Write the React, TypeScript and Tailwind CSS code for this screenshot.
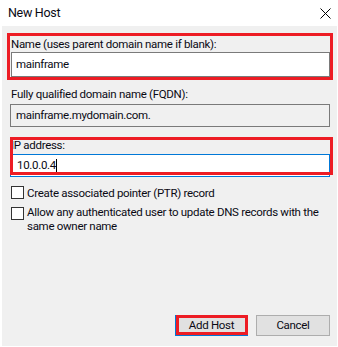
import React from 'react';

const Checkbox: React.FC = () => (
  <span className="block w-[13px] h-[13px] shrink-0 border border-[#333333] bg-white" />
);

const App: React.FC = () => {
  return (
    <div
      className="relative w-[338px] h-[347px] bg-white flex flex-col text-[11.5px] tracking-[-0.3px] text-[#0a0a14]"
      style={{ fontFamily: 'Roboto, "Liberation Sans", Arial, sans-serif' }}
    >
      {/* Title bar */}
      <div className="h-[26px] flex items-center justify-between pl-[8px] pr-[6px]">
        <span className="text-[12.5px] leading-[16px]">New Host</span>
        <svg width="11" height="11" viewBox="0 0 11 11" className="mr-[1px]">
          <path d="M0.5 0.5 L10.5 10.5 M10.5 0.5 L0.5 10.5" stroke="#000" strokeWidth="1" fill="none" />
        </svg>
      </div>

      {/* Dialog body */}
      <div className="flex-1 ml-[2px] mr-[1px] mb-[1px] bg-[#f0f0f0] flex flex-col pt-[11px] pl-[8px] pr-[7px]">
        <div className="pl-[1px] h-[15px] leading-[15px]">Name (uses parent domain name if blank):</div>
        <div className="ml-[1px] h-[25px] bg-white border border-[#7a7a7a] flex items-center pl-[4px]">
          mainframe
        </div>

        <div className="mt-[10px] pl-[1px] h-[15px] leading-[15px]">Fully qualified domain name (FQDN):</div>
        <div className="mt-[2px] h-[23px] border border-[#7a7a7a] flex items-center pl-[5px]">
          mainframe.mydomain.com.
        </div>

        <div className="mt-[11px] pl-[1px] h-[15px] leading-[15px]">IP address:</div>
        <div className="mt-[1px] h-[23px] bg-white border border-[#0078d7] flex items-center pl-[6px]">
          <span>10.0.0.4</span>
          <span className="inline-block w-[1px] h-[14px] bg-black" />
        </div>

        <label className="mt-[9px] ml-[1px] flex items-center gap-[3px] h-[13px] leading-[14px]">
          <Checkbox />
          <span>Create associated pointer (PTR) record</span>
        </label>
        <label className="mt-[6px] ml-[1px] flex items-start gap-[3px] leading-[14px]">
          <span className="mt-[2px]">
            <Checkbox />
          </span>
          <span className="w-[300px]">
            Allow any authenticated user to update DNS records with the same owner name
          </span>
        </label>

        <div className="flex-1" />

        <div className="flex justify-end items-end gap-[8px] pb-[10px]">
          <button className="w-[73px] h-[21px] bg-[#e1e1e1] border border-[#0078d7] leading-none">
            Add Host
          </button>
          <button className="w-[74px] h-[21px] bg-[#e1e1e1] border border-[#adadad] leading-none">
            Cancel
          </button>
        </div>
      </div>

      {/* Red annotation boxes */}
      <div className="absolute left-[7px] top-[33px] w-[326px] h-[47px] border-[3px] border-[#ed1c24]" />
      <div className="absolute left-[10px] top-[137px] w-[323px] h-[38px] border-[3px] border-[#ed1c24]" />
      <div className="absolute left-[176px] top-[315px] w-[72px] h-[20px] border-[3px] border-[#ed1c24]" />
    </div>
  );
};

export default App;
